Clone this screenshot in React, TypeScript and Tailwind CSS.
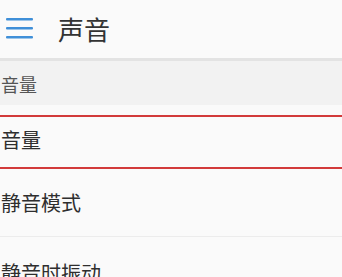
import React from "react";

const font = { fontFamily: '"Noto Sans CJK SC", "Noto Sans", sans-serif' };

function Menu() {
  return (
    <svg width="28" height="22" viewBox="0 0 28 22" className="shrink-0">
      <rect x="0" y="0" width="27" height="2.5" rx="1" fill="#3f8fd8" />
      <rect x="0" y="9" width="27" height="2.5" rx="1" fill="#3f8fd8" />
      <rect x="0" y="18" width="27" height="2.5" rx="1" fill="#3f8fd8" />
    </svg>
  );
}

export default function App() {
  return (
    <div className="w-[342px] h-[277px] overflow-hidden bg-[#fafafa]" style={font}>
      {/* Toolbar */}
      <div className="h-[58px] flex items-center pl-[6px] bg-[#fafafa] border-b-[3px] border-[#e3e3e3] box-content">
        <Menu />
        <span className="ml-[24px] text-[26px] leading-none text-[#333]">声音</span>
      </div>

      {/* Section header */}
      <div className="h-[44px] flex items-center pl-[1px] pt-[2px] bg-[#f2f2f2] text-[18px] text-[#555]">
        音量
      </div>

      <div className="h-[10px]" />

      {/* Focused row */}
      <div className="h-[46px] flex items-center pl-[1px] pb-[4px] border-y-2 border-[#d23a3a] box-content text-[20px] text-[#2e2e2e]">
        音量
      </div>

      <div className="h-[68px] flex items-center pl-[1px] border-b border-[#ececec] text-[20px] text-[#2e2e2e]">
        静音模式
      </div>

      <div className="h-[67px] flex items-center pl-[1px] pt-[4px] text-[20px] text-[#2e2e2e]">
        静音时振动
      </div>
    </div>
  );
}
